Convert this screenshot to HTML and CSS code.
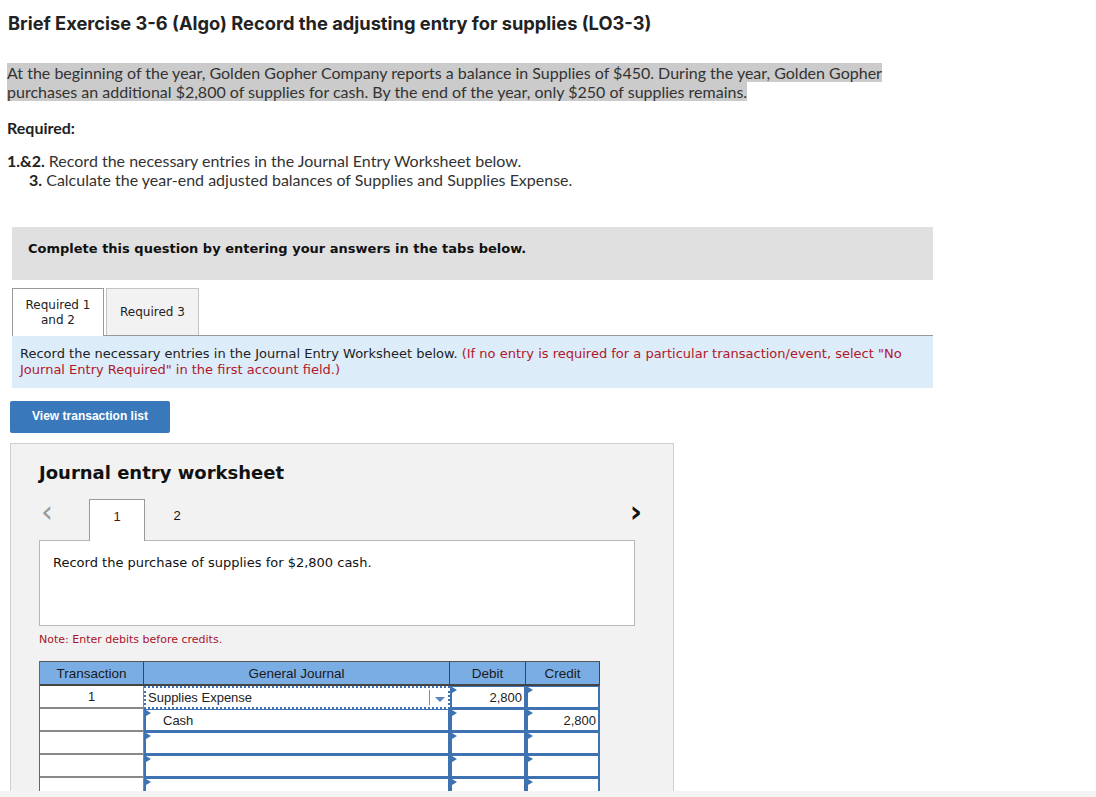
FILE: index.html
```html
<!DOCTYPE html>
<html lang="en">
<head>
    <meta charset="UTF-8">
    <title>Brief Exercise 3-6 (Algo)</title>
    <link rel="stylesheet" href="styles.css">
</head>
<body>
    <div class="page">
        <h1 class="title">Brief Exercise 3-6 (Algo) Record the adjusting entry for supplies (LO3-3)</h1>

        <p class="intro"><span class="hl">At the beginning of the year, Golden Gopher Company reports a balance in Supplies of $450. During the year, Golden Gopher purchases an additional $2,800 of supplies for cash. By the end of the year, only $250 of supplies remains.</span></p>

        <p class="required">Required:</p>
        <div class="req-list">
            <div><b>1.&amp;2.</b> Record the necessary entries in the Journal Entry Worksheet below.</div>
            <div class="indent"><b>3.</b> Calculate the year-end adjusted balances of Supplies and Supplies Expense.</div>
        </div>

        <div class="instructions">Complete this question by entering your answers in the tabs below.</div>

        <div class="tabs">
            <div class="tab active">Required 1<br>and 2</div>
            <div class="tab">Required 3</div>
        </div>
        <div class="tab-info">
            Record the necessary entries in the Journal Entry Worksheet below. <span class="red">(If no entry is required for a particular transaction/event, select "No Journal Entry Required" in the first account field.)</span>
        </div>

        <button class="btn">View transaction list</button>

        <div class="worksheet">
            <h2 class="ws-title">Journal entry worksheet</h2>
            <div class="ws-nav">
                <span class="arrow prev">&lsaquo;</span>
                <div class="ws-tab active">1</div>
                <div class="ws-tab">2</div>
                <span class="arrow next">&rsaquo;</span>
            </div>
            <div class="ws-desc">Record the purchase of supplies for $2,800 cash.</div>
            <div class="note">Note: Enter debits before credits.</div>

            <div class="journal">
                <div class="th">Transaction</div>
                <div class="th">General Journal</div>
                <div class="th">Debit</div>
                <div class="th">Credit</div>

                <div class="td num">1</div>
                <div class="in acct focus">Supplies Expense<span class="dd"></span></div>
                <div class="in amt">2,800</div>
                <div class="in amt"></div>

                <div class="td"></div>
                <div class="in acct credit-acct">Cash</div>
                <div class="in amt"></div>
                <div class="in amt">2,800</div>

                <div class="td"></div>
                <div class="in acct"></div>
                <div class="in amt"></div>
                <div class="in amt"></div>

                <div class="td"></div>
                <div class="in acct"></div>
                <div class="in amt"></div>
                <div class="in amt"></div>

                <div class="td"></div>
                <div class="in acct"></div>
                <div class="in amt"></div>
                <div class="in amt"></div>
            </div>
        </div>
    </div>
</body>
</html>
```

FILE: styles.css
```css
html {
    background: #f4f4f4;
}

body {
    margin: 0;
    background: #ffffff;
    height: 791px;
    overflow: hidden;
    font-family: Lato, 'Open Sans', sans-serif;
    color: #333;
}

.page {
    padding: 0 8px;
}

.title {
    font-family: Inter, Lato, sans-serif;
    font-size: 18.3px;
    font-weight: 700;
    color: #222;
    margin: 0;
    padding-top: 12px;
    line-height: 22px;
}

.intro {
    margin: 29px 0 0 -1px;
    font-size: 16px;
    line-height: 19px;
    width: 890px;
}

.hl {
    background: #cbcbcb;
}

.required {
    margin: 17px 0 0 -1px;
    font-size: 16px;
    font-weight: bold;
    color: #222;
    line-height: 19px;
}

.req-list {
    margin-top: 14px;
    margin-left: -1px;
    font-size: 16px;
    line-height: 19px;
}

.req-list b {
    color: #222;
}

.indent {
    padding-left: 22px;
}

.instructions {
    margin: 38px 0 0 4px;
    width: 921px;
    height: 53px;
    box-sizing: border-box;
    background: #e0e0e0;
    padding: 14px 16px 0;
    font-family: 'DejaVu Sans', Verdana, sans-serif;
    font-size: 13px;
    font-weight: bold;
    color: #111;
}

.tabs {
    display: flex;
    gap: 2px;
    margin: 8px 0 0 4px;
    width: 921px;
    border-bottom: 1px solid #999;
}

.tab {
    width: 93px;
    height: 47px;
    box-sizing: border-box;
    border: 1px solid #c4c4c4;
    border-bottom: none;
    background: #f2f2f2;
    display: flex;
    align-items: center;
    justify-content: center;
    text-align: center;
    font-family: 'DejaVu Sans', Verdana, sans-serif;
    font-size: 12px;
    line-height: 15px;
    color: #222;
}

.tab.active {
    width: 92px;
    background: #fff;
    border-color: #999;
    margin-bottom: -1px;
    height: 48px;
}

.tab-info {
    margin-left: 4px;
    width: 921px;
    box-sizing: border-box;
    background: #dcecf9;
    padding: 10px 8px 10px;
    font-family: 'DejaVu Sans', Verdana, sans-serif;
    font-size: 13px;
    line-height: 16px;
    color: #222;
}

.red {
    color: #b0182a;
}

.btn {
    display: block;
    margin: 13px 0 0 2px;
    width: 160px;
    height: 32px;
    background: #3a78bc;
    border: none;
    border-radius: 2px;
    color: #fff;
    font-family: 'Liberation Sans', Arial, sans-serif;
    font-size: 12px;
    font-weight: bold;
    padding: 0 0 2px;
}

.worksheet {
    margin: 10px 0 0 2px;
    width: 664px;
    box-sizing: border-box;
    background: #f2f2f2;
    border: 1px solid #cfcfcf;
    padding: 17px 0 40px 28px;
}

.ws-title {
    margin: 0;
    font-family: 'DejaVu Sans', Verdana, sans-serif;
    font-size: 18px;
    font-weight: bold;
    color: #111;
    line-height: 24px;
}

.ws-nav {
    display: flex;
    align-items: flex-end;
    margin-top: 14px;
    width: 603px;
    height: 41px;
    position: relative;
    z-index: 1;
}

.arrow {
    font-family: 'DejaVu Sans', sans-serif;
    font-size: 30px;
    line-height: 30px;
    align-self: flex-start;
    margin-top: -2px;
}

.arrow.prev {
    color: #999;
    width: 48px;
    padding-left: 2px;
}

.arrow.next {
    color: #111;
    margin-left: auto;
    font-weight: bold;
}

.ws-tab {
    width: 56px;
    height: 41px;
    box-sizing: border-box;
    display: flex;
    align-items: center;
    justify-content: center;
    font-family: 'Liberation Sans', Arial, sans-serif;
    font-size: 13px;
    color: #111;
    padding-bottom: 8px;
}

.ws-tab.active {
    background: #fff;
    border: 1px solid #999;
    border-bottom: none;
    height: 42px;
    margin-bottom: -1px;
    color: #5a1010;
}

.ws-tab + .ws-tab {
    margin-left: 4px;
}

.ws-desc {
    width: 596px;
    height: 86px;
    box-sizing: border-box;
    background: #fff;
    border: 1px solid #b8b8b8;
    padding: 14px 13px;
    font-family: 'DejaVu Sans', Verdana, sans-serif;
    font-size: 13px;
    color: #111;
}

.note {
    margin-top: 7px;
    font-family: 'DejaVu Sans', Verdana, sans-serif;
    font-size: 11px;
    color: #a8122a;
}

.journal {
    margin-top: 15px;
    display: grid;
    grid-template-columns: 104px 306px 76px 74px;
    grid-auto-rows: 23px;
    grid-template-rows: 25px;
    font-family: 'Liberation Sans', Arial, sans-serif;
    font-size: 13px;
    color: #222;
    border-left: 1px solid #666;
}

.th {
    background: #7aade4;
    border-top: 1px solid #555;
    border-right: 1px solid #444;
    border-bottom: 2px solid #444;
    display: flex;
    align-items: center;
    justify-content: center;
    font-size: 13.5px;
    color: #1a1a1a;
}

.td {
    background: #fff;
    border-right: 1px solid #888;
    border-bottom: 2px solid #888;
    display: flex;
    align-items: center;
    justify-content: center;
}

.in {
    background: #fff;
    border: 2px solid #3f72b1;
    border-top-width: 1px;
    position: relative;
    display: flex;
    align-items: center;
    box-sizing: border-box;
}

.in::before {
    content: "";
    position: absolute;
    left: 0;
    top: 0;
    border-left: 5px solid #3f72b1;
    border-top: 3px solid transparent;
    border-bottom: 3px solid transparent;
}

.acct {
    padding-left: 2px;
}

.credit-acct {
    padding-left: 17px;
}

.amt {
    justify-content: flex-end;
    padding-right: 2px;
}

.focus {
    border: 2px dotted #3f72b1;
}

.focus::before {
    display: none;
}

.dd {
    position: absolute;
    right: 0;
    top: 2px;
    bottom: 2px;
    width: 18px;
    border-left: 1px solid #6b8fc0;
}

.dd::after {
    content: "";
    position: absolute;
    left: 5px;
    top: 7px;
    border-top: 5px solid #5a84bf;
    border-left: 5px solid transparent;
    border-right: 5px solid transparent;
}
```
